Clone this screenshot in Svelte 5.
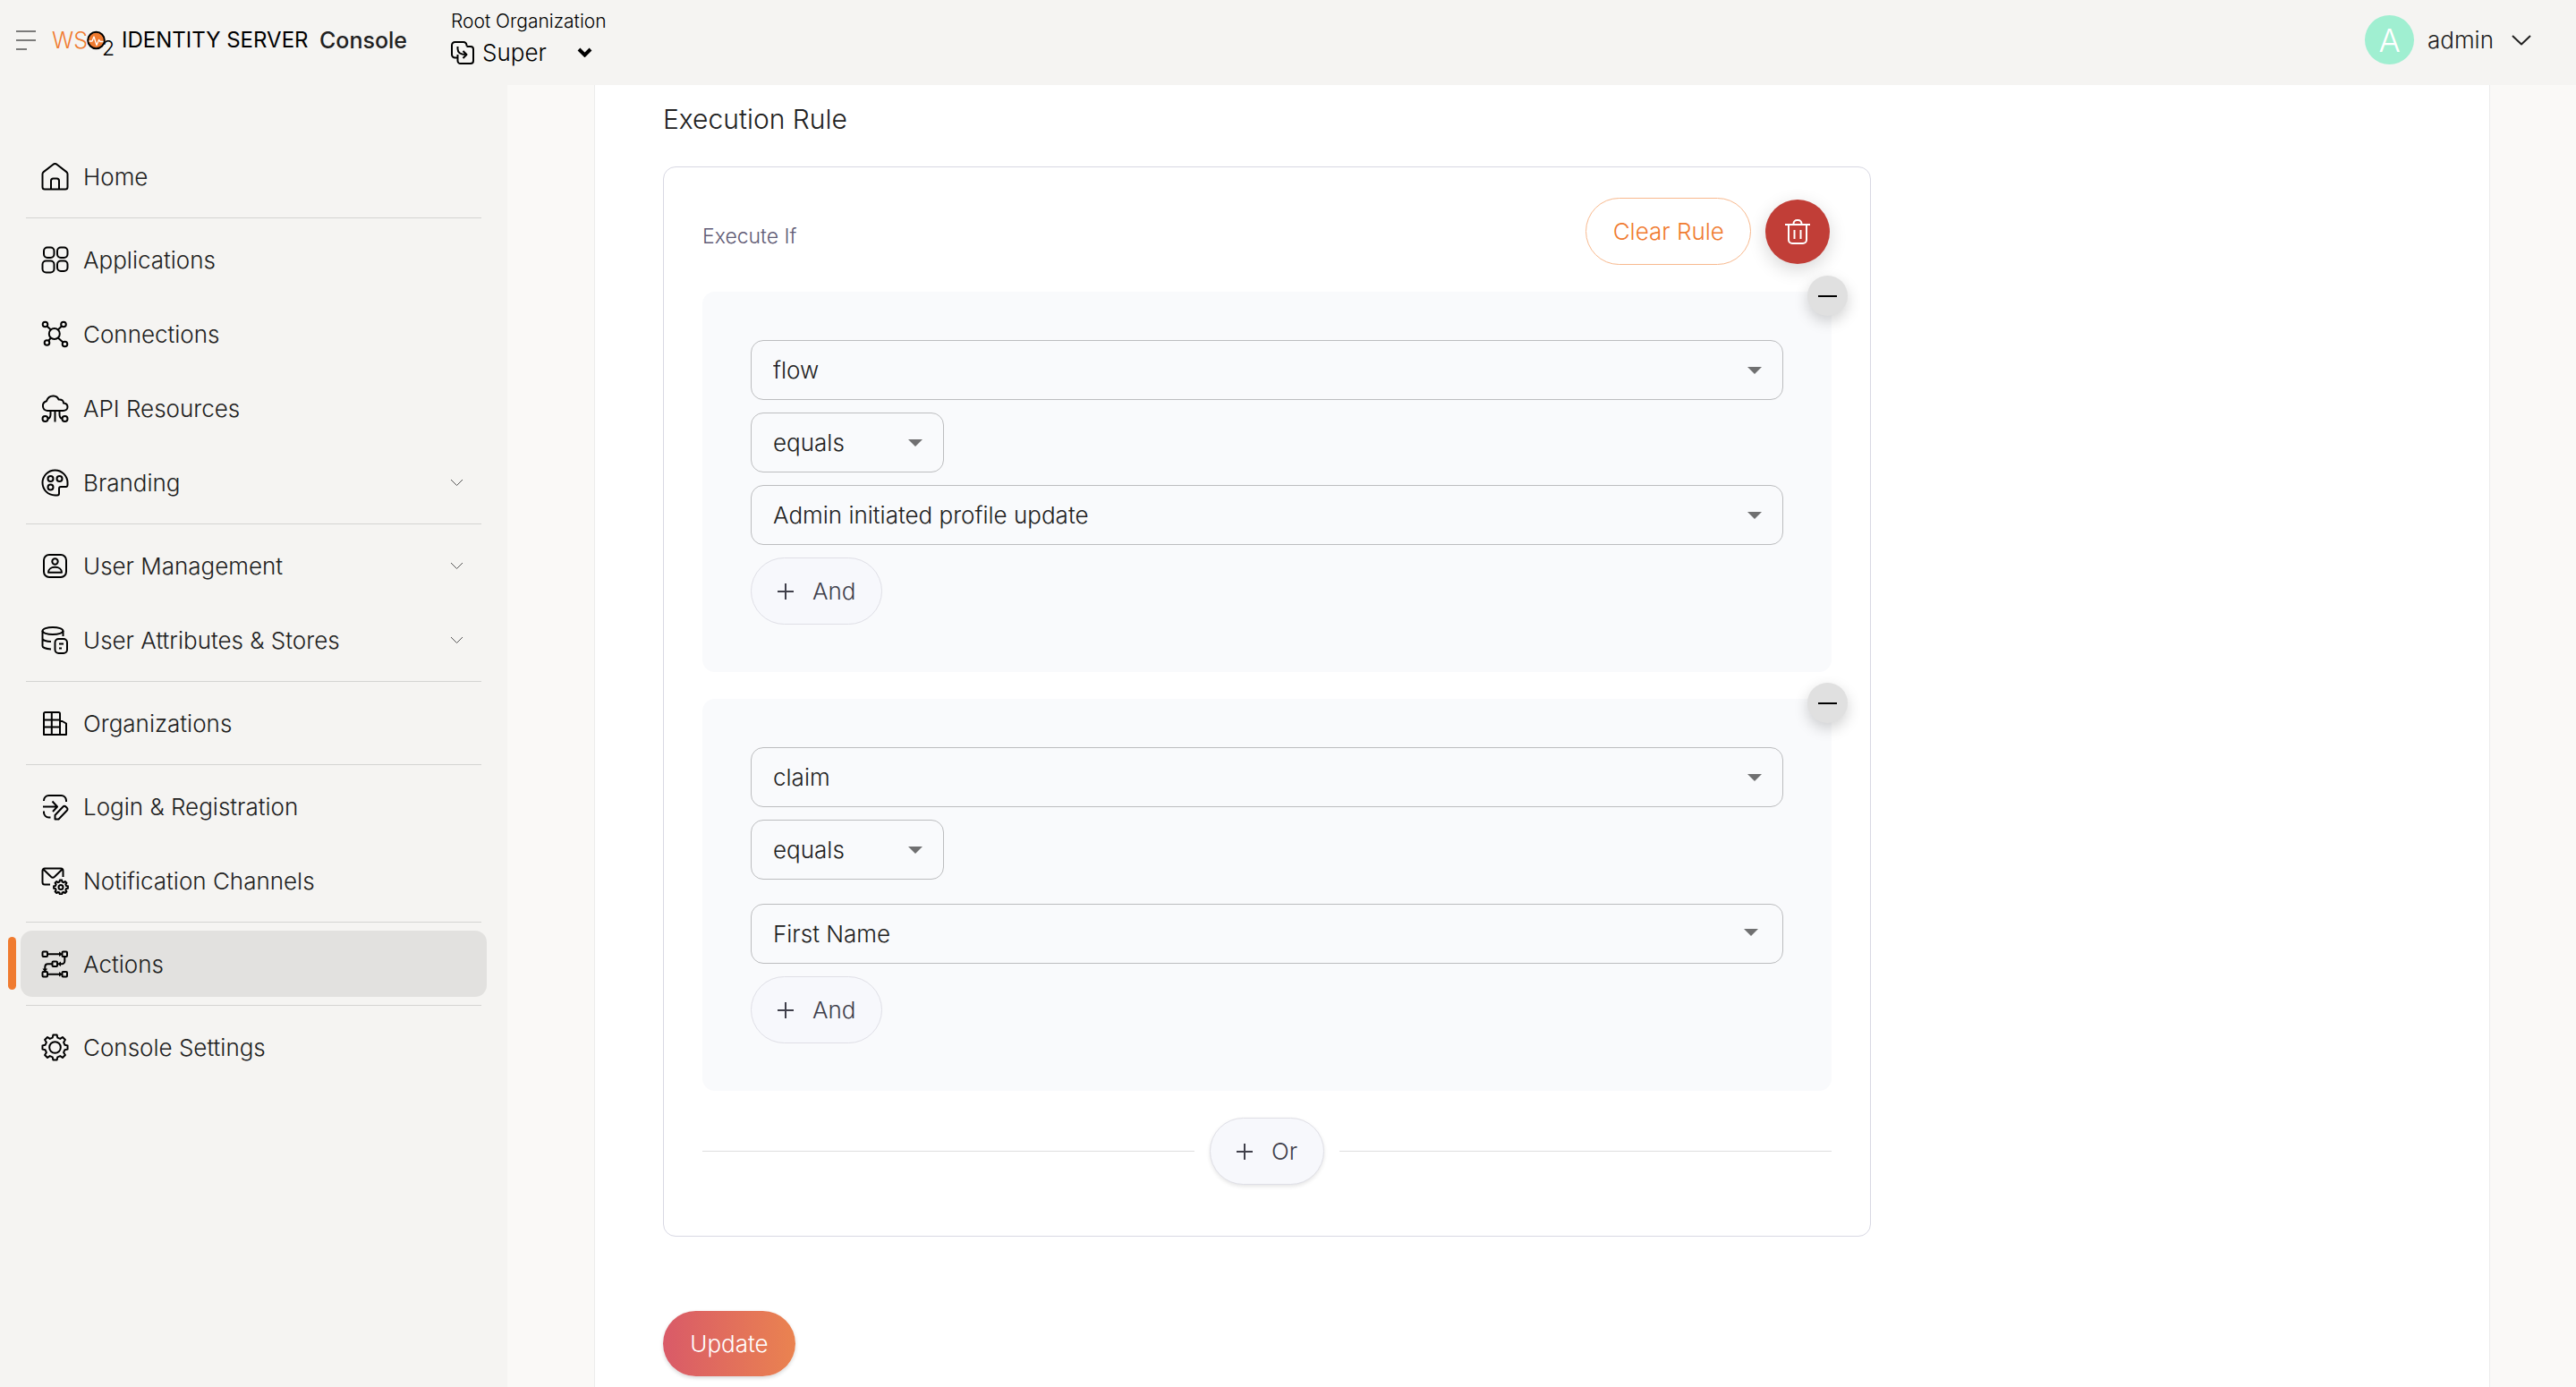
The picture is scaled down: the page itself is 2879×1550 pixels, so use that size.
<script>
	const groups = [
		[{ name: 'Home', icon: 'home' }],
		[
			{ name: 'Applications', icon: 'apps' },
			{ name: 'Connections', icon: 'connections' },
			{ name: 'API Resources', icon: 'api' },
			{ name: 'Branding', icon: 'branding', expandable: true }
		],
		[
			{ name: 'User Management', icon: 'user', expandable: true },
			{ name: 'User Attributes & Stores', icon: 'stores', expandable: true }
		],
		[{ name: 'Organizations', icon: 'organizations' }],
		[
			{ name: 'Login & Registration', icon: 'login' },
			{ name: 'Notification Channels', icon: 'notification' }
		],
		[{ name: 'Actions', icon: 'actions' }],
		[{ name: 'Console Settings', icon: 'settings' }]
	];

	const fields = ['flow', 'claim'];
	const operators = ['equals', 'not equals'];

	let active = 'Actions';
	let rules = [
		{ field: 'flow', operator: 'equals', value: 'Admin initiated profile update', values: ['Admin initiated profile update'] },
		{ field: 'claim', operator: 'equals', value: 'First Name', values: ['First Name'], searchable: true }
	];

	// outline of a cog with eight teeth, centred on cx, cy
	function cog(cx, cy, outer, inner) {
		let points = [];
		for (let i = 0; i < 8; i++) {
			const mid = (i * Math.PI) / 4;
			for (const [offset, radius] of [[-0.25, inner], [-0.15, outer], [0.15, outer], [0.25, inner]]) {
				const x = cx + radius * Math.sin(mid + offset);
				const y = cy - radius * Math.cos(mid + offset);
				points.push(x.toFixed(2) + ' ' + y.toFixed(2));
			}
		}
		return 'M' + points.join('L') + 'Z';
	}

	function removeRule(index) {
		rules = rules.filter((_, i) => i !== index);
	}

	function addRule() {
		rules = [...rules, { field: 'flow', operator: 'equals', value: 'Admin initiated profile update', values: ['Admin initiated profile update'] }];
	}
</script>

<header>
	<button class="burger" aria-label="Toggle menu">
		<svg width="22" height="22" viewBox="0 0 22 22"><path d="M0 1h22M0 11h22M0 21h12" /></svg>
	</button>
	<a class="brand" href="#home">
		<span class="wso2">
			<span class="ws">WS</span>
			<svg width="21" height="22" viewBox="0 0 21 22">
				<circle cx="10.5" cy="11" r="9.3" fill="#f07b30" stroke="#000" stroke-width="2" />
				<path d="M2.500 12h3.500l2-5 3 9.500 2.500-6 1.500 2h3.500" fill="none" stroke="#fff" stroke-width="1.3" />
			</svg>
			<span class="two">2</span>
		</span>
		<span class="product">IDENTITY SERVER</span>
		<span class="console">Console</span>
	</a>
	<div class="organization">
		<span class="root">Root Organization</span>
		<button class="switch">
			<svg class="org-icon" width="26" height="26" viewBox="0 0 26 26">
				<path d="M7 18.500H4.500A3.500 3.500 0 0 1 1 15V4.500A3.500 3.500 0 0 1 4.500 1H14a3.500 3.500 0 0 1 3.500 3.500v1" />
				<path d="M7.500 15V22a3 3 0 0 0 3 3H22a3 3 0 0 0 3-3V9a3 3 0 0 0-3-3h-4.500" />
				<path d="M7.500 6v2.500c0 4 3 6.500 9.500 6.500M13.500 11l4 4-4 4" />
			</svg>
			Super
			<svg class="caret" width="17" height="11" viewBox="0 0 17 11"><path d="M2 2l6.500 6.500L15 2" /></svg>
		</button>
	</div>
	<button class="account">
		<span class="avatar">A</span>
		admin
		<svg width="22" height="12" viewBox="0 0 22 12"><path d="M1 1l10 9.500L21 1" /></svg>
	</button>
</header>

<div class="layout">
	<nav>
		{#each groups as group}
			<ul>
				{#each group as item}
					<li class:active={active === item.name}>
						<a href={'#' + item.icon} on:click={() => (active = item.name)}>
							<svg class="icon" width="31" height="31" viewBox="0 0 31 31">
								{#if item.icon === 'home'}
									<path d="M1.500 12.500a3 3 0 0 1 1.200-2.400L13.500 1.800a3.200 3.200 0 0 1 4 0l10.800 8.300a3 3 0 0 1 1.200 2.400V27a2.500 2.500 0 0 1-2.500 2.500H4A2.500 2.500 0 0 1 1.500 27zM11 29.500V20a2.500 2.500 0 0 1 2.500-2.500h4A2.500 2.500 0 0 1 20 20v9.500" />
								{:else if item.icon === 'apps'}
									<rect x="3" y="1.5" width="11.5" height="11.5" rx="4" />
									<rect x="18" y="1.5" width="11.5" height="11.5" rx="4" />
									<rect x="1.5" y="16.5" width="13" height="13" rx="4" />
									<rect x="18" y="16.5" width="11.5" height="11.5" rx="4" />
								{:else if item.icon === 'connections'}
									<circle cx="14.8" cy="15" r="6" />
									<circle cx="4.5" cy="4.5" r="2.8" />
									<circle cx="25" cy="4.5" r="2.8" />
									<circle cx="6.5" cy="25" r="2.8" />
									<circle cx="26.500" cy="26.5" r="2.8" />
									<path d="M6.500 6.500l4.300 4M23 6.500l-4.200 4M8.300 22.700l2.700-3.200M24.400 24.400l-5.600-5" />
								{:else if item.icon === 'api'}
									<path d="M7 18a5.500 5.500 0 0 1-1-10.800C7.500 3 11 1.300 14 1.500c3 .2 4.700 1.700 5.500 4 3.500-.6 5.500 1.500 5.500 4 3 .3 4.500 2 4.500 4.300S27.500 18 24.500 18z" />
									<circle cx="4.5" cy="27" r="3" />
									<circle cx="26.5" cy="27" r="3" />
									<path d="M15.500 18v12.500M10.500 18v4c0 3-1.500 4.500-3 4.800M20.500 18v4c0 3 1.500 4.500 3 4.800" />
								{:else if item.icon === 'branding'}
									<path d="M15.500 1.500a14 14 0 0 0 0 28H18a2 2 0 0 0 2-2V22a2 2 0 0 1 2-2h6a2 2 0 0 0 1.500-2v-2.500a14 14 0 0 0-14-14z" />
									<circle cx="10.5" cy="11" r="3" />
									<circle cx="20.5" cy="11" r="3" />
									<circle cx="10.5" cy="20.5" r="3" />
								{:else if item.icon === 'user'}
									<rect x="3" y="3" width="25" height="25" rx="6" />
									<circle cx="15.5" cy="10.5" r="3.2" />
									<path d="M8 22.800c0-3.500 3-6 7.500-6s7.500 2.500 7.500 6z" />
								{:else if item.icon === 'stores'}
									<ellipse cx="13" cy="5" rx="11.5" ry="4" />
									<path d="M1.500 5v17c0 1.500 4 3.200 9.500 3.500M24.500 5V11M1.500 13.500c0 2 4.500 3.500 9.500 3.500" />
									<rect x="15.500" y="14" width="13.5" height="16" rx="4" />
									<path d="M20 19.500h5M20 24.500h3" />
								{:else if item.icon === 'organizations'}
									<path d="M3 28V4.500A1.500 1.500 0 0 1 4.500 3h15A1.500 1.500 0 0 1 21 4.500V28zM3 11.500h18M3 19.500h18M11.800 3v25M21 11.500l7 4V28h-7" />
								{:else if item.icon === 'login'}
									<path d="M3 9V8.500A5.500 5.500 0 0 1 8.500 3h14A5.500 5.500 0 0 1 28 8.500V10M3 20.500V22a5.500 5.500 0 0 0 5.500 5.500h2M2 15.500h15M12.500 9.500l5.500 6-5 5.500" />
									<path d="M15.500 29.500v-4.500l9-9.500a2 2 0 0 1 3 0l1.300 1.300a2 2 0 0 1 0 3l-9.300 9.700z" />
								{:else if item.icon === 'notification'}
									<path d="M10 19.500H4A2.500 2.500 0 0 1 1.500 17V4A2.500 2.500 0 0 1 4 1.500h18A2.500 2.500 0 0 1 24.500 4v7M2.500 2.500l8.500 8.300a3 3 0 0 0 4 0l8.500-8.300" />
									<path d={cog(22, 22.5, 8, 6.2)} />
									<circle cx="22" cy="22.5" r="2.5" />
								{:else if item.icon === 'actions'}
									<rect x="1.5" y="1.5" width="5.5" height="5.5" rx="1" />
									<rect x="23.5" y="1.5" width="5.5" height="5.5" rx="1" />
									<rect x="12.5" y="12.5" width="5.500" height="5.5" rx="1" />
									<rect x="1.5" y="24" width="5.5" height="5.500" rx="1" />
									<rect x="23.5" y="24" width="5.5" height="5.5" rx="1" />
									<path d="M7 4.300h14M26.300 7v5a3.300 3.300 0 0 1-3.300 3.300h-2M12.500 15.300H7.500A3.300 3.300 0 0 0 4.300 18.500v3M7 26.800h14" />
									<path class="arrows" d="M20 1.500v5.600l4-2.800zM22 12.500v5.600l-4-2.800zM1.500 20.500h5.600l-2.800 4zM20 24v5.600l4-2.800z" />
								{:else}
									<path d={cog(15.5, 15.5, 14.2, 11.2)} />
									<circle cx="15.5" cy="15.5" r="6.3" />
								{/if}
							</svg>
							<span>{item.name}</span>
							{#if item.expandable}
								<svg class="expand" width="15" height="9" viewBox="0 0 15 9"><path d="M1 1l6.500 6.500L14 1" /></svg>
							{/if}
						</a>
					</li>
				{/each}
			</ul>
		{/each}
	</nav>

	<main>
		<section class="page">
			<h2>Execution Rule</h2>
			<div class="rule-box">
				<div class="rule-head">
					<span class="execute-if">Execute If</span>
					<button class="clear" on:click={() => (rules = rules.slice(0, 1))}>Clear Rule</button>
					<button class="trash" aria-label="Delete rule" on:click={() => (rules = [])}>
						<svg width="28" height="28" viewBox="0 0 28 28">
							<path d="M0 6h28M4 6v17a4 4 0 0 0 4 4h12a4 4 0 0 0 4-4V6M9.500 6V5a4 4 0 0 1 4-4h1a4 4 0 0 1 4 4v1M10.500 12v10M17.500 12v10" />
						</svg>
					</button>
				</div>

				{#each rules as rule, i}
					<div class="group">
						<button class="remove" aria-label="Remove group" on:click={() => removeRule(i)}>
							<svg width="21" height="2" viewBox="0 0 21 2"><path d="M0 1h21" /></svg>
						</button>
						<div class="select">
							<select aria-label="Field" bind:value={rule.field}>
								{#each fields as field}
									<option value={field}>{field}</option>
								{/each}
							</select>
							<svg width="16" height="8" viewBox="0 0 16 8"><path d="M0 0h16L8 8z" /></svg>
						</div>
						<div class="select small">
							<select aria-label="Operator" bind:value={rule.operator}>
								{#each operators as operator}
									<option value={operator}>{operator}</option>
								{/each}
							</select>
							<svg width="16" height="8" viewBox="0 0 16 8"><path d="M0 0h16L8 8z" /></svg>
						</div>
						<div class="select" class:searchable={rule.searchable}>
							<select aria-label="Value" bind:value={rule.value}>
								{#each rule.values as value}
									<option {value}>{value}</option>
								{/each}
							</select>
							<svg width="16" height="8" viewBox="0 0 16 8"><path d="M0 0h16L8 8z" /></svg>
						</div>
						<button class="add">
							<svg width="18" height="18" viewBox="0 0 18 18"><path d="M0 9h18M9 0v18" /></svg>
							And
						</button>
					</div>
				{/each}

				<div class="or-row">
					<button class="add or" on:click={addRule}>
						<svg width="18" height="18" viewBox="0 0 18 18"><path d="M0 9h18M9 0v18" /></svg>
						Or
					</button>
				</div>
			</div>
			<button class="update">Update</button>
		</section>
	</main>
</div>

<style>
	:global(body) {
		margin: 0;
		background: #faf9f7;
		font-family: Inter, sans-serif;
		font-size: 26px;
		font-weight: 300;
		color: #212121;
	}
	* {
		box-sizing: border-box;
	}
	button {
		border: 0;
		padding: 0;
		background: none;
		font: inherit;
		color: inherit;
		cursor: pointer;
		display: flex;
		align-items: center;
		justify-content: center;
	}
	a {
		color: inherit;
		text-decoration: none;
	}
	svg {
		flex: none;
		fill: none;
		stroke: currentColor;
		stroke-linejoin: round;
	}

	header {
		height: 95px;
		display: flex;
		align-items: center;
		padding: 0 50px 6px 18px;
		background: #f5f4f2;
	}
	.burger {
		margin-right: 18px;
		color: #7b7b7a;
	}
	.burger svg {
		stroke-width: 2;
	}
	.brand {
		display: flex;
		align-items: center;
		width: 446px;
	}
	.wso2 {
		display: flex;
		align-items: center;
		width: 78px;
	}
	.ws {
		width: 39px;
		font-size: 25px;
		color: #f07b30;
	}
	.two {
		margin: 18px 0 0 -4px;
		font-size: 23px;
		line-height: 20px;
		color: #000;
	}
	.product {
		width: 221px;
		font-size: 24px;
		font-weight: 400;
		color: #000;
		white-space: nowrap;
	}
	.console {
		font-size: 25px;
		font-weight: 500;
	}
	.organization {
		display: flex;
		flex-direction: column;
		gap: 2px;
		margin-bottom: 4px;
		color: #000;
	}
	.root {
		font-size: 21px;
		line-height: 30px;
	}
	.switch {
		justify-content: flex-start;
		line-height: 36px;
	}
	.org-icon {
		margin-right: 9px;
		stroke-width: 2;
	}
	.caret {
		margin-left: 34px;
		stroke-width: 4;
		stroke-linejoin: miter;
	}
	.account {
		margin-left: auto;
	}
	.account svg {
		margin-left: 20px;
		stroke-width: 2;
	}
	.avatar {
		width: 55px;
		height: 55px;
		margin-right: 15px;
		border-radius: 50%;
		background: #a0efd1;
		color: #fff;
		font-size: 36px;
		line-height: 56px;
	}

	.layout {
		display: flex;
		min-height: calc(100vh - 95px);
	}
	nav {
		flex: none;
		width: 567px;
		padding: 65px 23px 0;
		background: #f5f4f2;
	}
	ul {
		list-style: none;
		margin: 0;
		padding: 0;
		display: flex;
		flex-direction: column;
		gap: 9px;
	}
	ul + ul::before {
		content: '';
		height: 1px;
		margin: 9px 6px 0;
		background: #d4d4d2;
	}
	li {
		position: relative;
		border-radius: 13px;
	}
	li a {
		display: flex;
		align-items: center;
		height: 74px;
		padding: 0 26px 0 23px;
	}
	.icon {
		margin-right: 16px;
		color: #000;
		stroke-width: 2;
	}
	.arrows {
		fill: currentColor;
		stroke: none;
	}
	.expand {
		margin-left: auto;
		color: #555;
	}
	.active {
		background: #e2e1df;
	}
	.active::before {
		content: '';
		position: absolute;
		left: -14px;
		top: 7px;
		bottom: 8px;
		width: 9px;
		border-radius: 5px;
		background: #f07b30;
	}

	main {
		flex: 1;
		display: flex;
		padding: 0 96px 0 97px;
	}
	.page {
		flex: 1;
		padding: 18px 77px 12px 76px;
		border: solid #ececec;
		border-width: 0 1px;
		background: #fff;
	}
	h2 {
		margin: 0 0 33px;
		font-size: 30px;
		line-height: 40px;
		font-weight: 300;
	}
	.rule-box {
		width: 68.75%;
		padding: 34px 43px 57px;
		border: 1px solid #d8d8e3;
		border-radius: 14px;
	}
	.rule-head {
		display: flex;
		align-items: center;
		margin-bottom: 30px;
	}
	.execute-if {
		margin: 10px auto 0 0;
		font-size: 23px;
		color: #5f5b75;
	}
	.clear {
		width: 185px;
		height: 75px;
		margin-right: 16px;
		border: 1px solid #f8b98e;
		border-radius: 38px;
		color: #f07b30;
	}
	.trash {
		width: 72px;
		height: 72px;
		margin-right: 2px;
		border-radius: 50%;
		background: #c13e37;
		color: #fff;
		box-shadow: 0 6px 20px rgba(0, 0, 0, 0.16);
	}
	.trash svg {
		stroke-width: 2;
	}
	.group {
		position: relative;
		display: flex;
		flex-direction: column;
		align-items: flex-start;
		gap: 14px;
		padding: 54px 54px 53px;
		margin-bottom: 30px;
		border-radius: 14px;
		background: #f9fafc;
	}
	.remove {
		position: absolute;
		top: -18px;
		right: -18px;
		width: 45px;
		height: 45px;
		border-radius: 50%;
		background: #e0e0e0;
		color: #000;
		box-shadow: 0 6px 16px rgba(0, 0, 0, 0.18);
	}
	.remove svg {
		stroke-width: 2;
	}
	.select {
		display: grid;
		align-items: center;
		width: 100%;
	}
	.select.small {
		width: 216px;
	}
	.select select {
		grid-area: 1 / 1;
		width: 100%;
		height: 67px;
		padding: 0 60px 0 24px;
		appearance: none;
		border: 1px solid #bcbdbf;
		border-radius: 14px;
		background: #f9fafc;
		font: inherit;
		color: inherit;
	}
	.select svg {
		grid-area: 1 / 1;
		justify-self: end;
		margin-right: 24px;
		pointer-events: none;
		fill: #707071;
		stroke: none;
	}
	.searchable {
		margin-top: 13px;
	}
	.searchable svg {
		margin: 0 28px 4px 0;
	}
	.add {
		gap: 21px;
		height: 75px;
		padding: 0 29px;
		border: 1px solid #dfdfe6;
		border-radius: 38px;
		background: #f7f8fc;
		color: #40404b;
	}
	.add svg {
		stroke-width: 2;
	}
	.or-row {
		display: flex;
		align-items: center;
		gap: 17px;
	}
	.or-row::before,
	.or-row::after {
		content: '';
		flex: 1;
		height: 1px;
		background: #dededf;
	}
	.or {
		box-shadow: 0 2px 4px rgba(0, 0, 0, 0.1);
	}
	.update {
		width: 148px;
		height: 73px;
		margin-top: 83px;
		border-radius: 37px;
		background: linear-gradient(90deg, #d95a68, #ea8350);
		color: #fff;
		box-shadow: 0 2px 4px rgba(0, 0, 0, 0.16);
	}
</style>
